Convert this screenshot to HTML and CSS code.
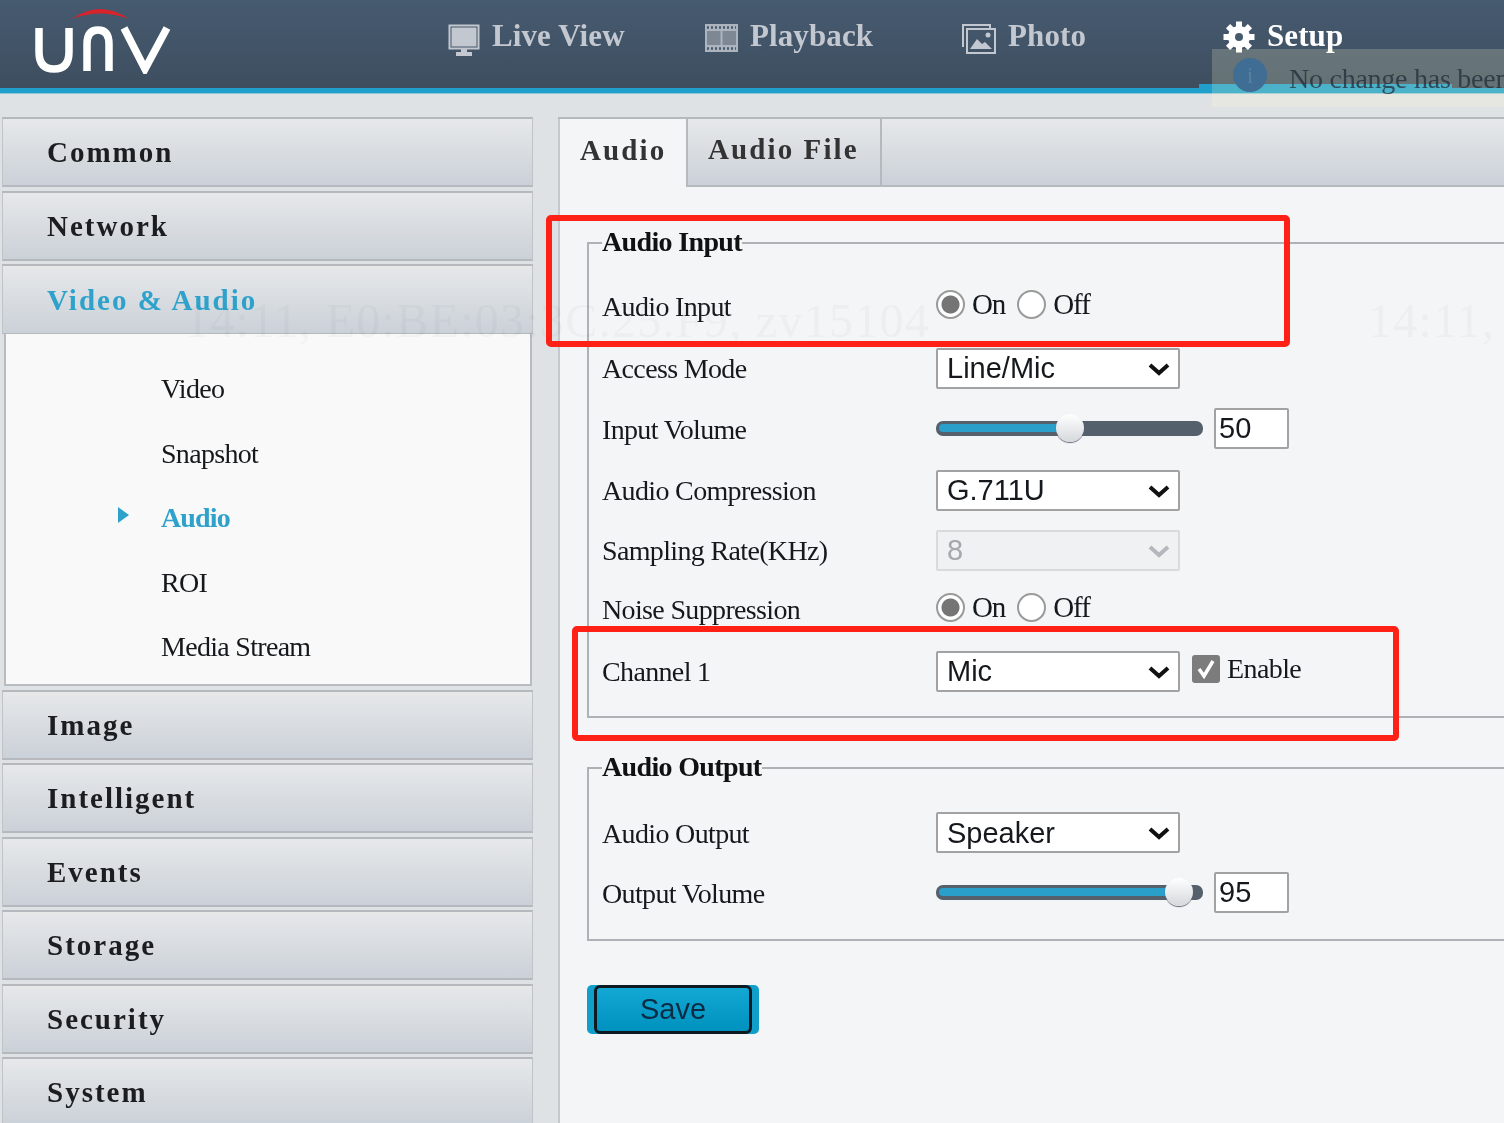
FILE: index.html
```html
<!DOCTYPE html>
<html lang="en">
<head>
<meta charset="utf-8">
<title>Audio Setup</title>
<link rel="stylesheet" href="styles.css">
</head>
<body>
<div class="page">
  <header class="topbar">
    <svg class="logo" width="140" height="72" viewBox="0 0 140 72">
      <path d="M38 17 Q66 -3 95 17 Q66 6 38 17Z" fill="#d8232a"/>
      <path d="M5 26V50Q5 67 20 67Q35 67 35 50V26" fill="none" stroke="#fff" stroke-width="7.5"/>
      <path d="M53 69V42Q53 28 64 28Q75 28 75 42V69" fill="none" stroke="#fff" stroke-width="7.5"/>
      <path d="M90 26L111 67L133 26" fill="none" stroke="#fff" stroke-width="7.5"/>
    </svg>
    <nav class="nav">
      <a class="nav-item">
        <svg width="32" height="34" viewBox="0 0 32 34"><rect x="1" y="1" width="30" height="24" fill="#c3c7d0" stroke="#c3c7d0"/><rect x="3" y="3" width="26" height="20" fill="#c3c7d0" stroke="#46596c" stroke-width="1"/><rect x="13" y="25" width="6" height="4" fill="#c3c7d0"/><rect x="8" y="28" width="16" height="4" fill="#c3c7d0"/></svg>
        <span>Live View</span>
      </a>
      <a class="nav-item">
        <svg width="33" height="28" viewBox="0 0 33 28"><rect width="33" height="28" fill="#aeb4bd"/><path d="M2 3.5H31M2 24.5H31" stroke="#46596c" stroke-width="2.4" stroke-dasharray="2 2"/><rect x="2" y="7" width="13.5" height="14" fill="#7d8894"/><rect x="17.5" y="7" width="13.5" height="14" fill="#7d8894"/></svg>
        <span>Playback</span>
      </a>
      <a class="nav-item">
        <svg width="34" height="30" viewBox="0 0 34 30"><path d="M1 23V1H28V5" fill="none" stroke="#c3c7d0" stroke-width="2"/><rect x="5" y="5" width="28" height="24" fill="none" stroke="#c3c7d0" stroke-width="2"/><path d="M8 25L15 15L20 20L23 18L30 25Z" fill="#c3c7d0"/><circle cx="26" cy="11" r="2.5" fill="#c3c7d0"/></svg>
        <span>Photo</span>
      </a>
      <a class="nav-item active">
        <svg width="32" height="32" viewBox="-16 -16 32 32"><g fill="#fff"><rect x="-3" y="-15.5" width="6" height="31"/><rect x="-3" y="-15.5" width="6" height="31" transform="rotate(45)"/><rect x="-3" y="-15.5" width="6" height="31" transform="rotate(90)"/><rect x="-3" y="-15.5" width="6" height="31" transform="rotate(135)"/></g><circle r="7.5" fill="none" stroke="#fff" stroke-width="7"/><circle r="4" fill="#465a6e"/></svg>
        <span>Setup</span>
      </a>
    </nav>
  </header>

  <main class="body">
    <aside class="sidebar">
      <div class="menu-head">Common</div>
      <div class="menu-head">Network</div>
      <div class="menu-group">
        <div class="menu-head current">Video &amp; Audio</div>
        <ul class="submenu">
          <li>Video</li>
          <li>Snapshot</li>
          <li class="selected">Audio</li>
          <li>ROI</li>
          <li>Media Stream</li>
        </ul>
      </div>
      <div class="menu-head">Image</div>
      <div class="menu-head">Intelligent</div>
      <div class="menu-head">Events</div>
      <div class="menu-head">Storage</div>
      <div class="menu-head">Security</div>
      <div class="menu-head">System</div>
    </aside>

    <section class="content">
      <div class="tabs">
        <div class="tab on">Audio</div>
        <div class="tab">Audio File</div>
      </div>
      <div class="panel">
        <fieldset class="group input-group">
          <legend>Audio Input</legend>
          <div class="row"><label>Audio Input</label><div class="ctl radios"><input type="radio" name="a" checked><span>On</span><input type="radio" name="a"><span>Off</span></div></div>
          <div class="row"><label>Access Mode</label><div class="ctl"><div class="sel"><select><option>Line/Mic</option></select><svg width="22" height="14" viewBox="0 0 22 14"><path d="M2 3L11 11L20 3" fill="none" stroke="#111" stroke-width="4"/></svg></div></div></div>
          <div class="row"><label>Input Volume</label><div class="ctl"><div class="slider"><div class="fill half"></div><div class="thumb"></div></div><input class="num" type="text" value="50"></div></div>
          <div class="row"><label>Audio Compression</label><div class="ctl"><div class="sel"><select><option>G.711U</option></select><svg width="22" height="14" viewBox="0 0 22 14"><path d="M2 3L11 11L20 3" fill="none" stroke="#111" stroke-width="4"/></svg></div></div></div>
          <div class="row"><label>Sampling Rate(KHz)</label><div class="ctl"><div class="sel off"><select disabled><option>8</option></select><svg width="22" height="14" viewBox="0 0 22 14"><path d="M2 3L11 11L20 3" fill="none" stroke="#b4b8bc" stroke-width="4"/></svg></div></div></div>
          <div class="row"><label>Noise Suppression</label><div class="ctl radios"><input type="radio" name="n" checked><span>On</span><input type="radio" name="n"><span>Off</span></div></div>
          <div class="row"><label>Channel 1</label><div class="ctl"><div class="sel"><select><option>Mic</option></select><svg width="22" height="14" viewBox="0 0 22 14"><path d="M2 3L11 11L20 3" fill="none" stroke="#111" stroke-width="4"/></svg></div><div class="check"><svg width="28" height="28" viewBox="0 0 28 28"><rect width="28" height="28" rx="3" fill="#7c7c7c"/><path d="M7 14L12 21L21 6" fill="none" stroke="#fff" stroke-width="3.5"/></svg><span>Enable</span></div></div></div>
        </fieldset>
        <fieldset class="group output-group">
          <legend>Audio Output</legend>
          <div class="row"><label>Audio Output</label><div class="ctl"><div class="sel"><select><option>Speaker</option></select><svg width="22" height="14" viewBox="0 0 22 14"><path d="M2 3L11 11L20 3" fill="none" stroke="#111" stroke-width="4"/></svg></div></div></div>
          <div class="row"><label>Output Volume</label><div class="ctl"><div class="slider"><div class="fill most"></div><div class="thumb"></div></div><input class="num" type="text" value="95"></div></div>
        </fieldset>
        <div class="save-wrap"><button class="save" type="button">Save</button></div>
      </div>
    </section>
  </main>

  <div class="tab-line"></div>
  <div class="toast"><i class="toast-icon">i</i><span>No change has been</span></div>
  <div class="mark mark-a">14:11, E0:BE:03:3C.25.F9, zv15104</div>
  <div class="mark mark-b">14:11,</div>
  <div class="redbox box-a"></div>
  <div class="redbox box-b"></div>
</div>
</body>
</html>
```
FILE: styles.css
```css
* { box-sizing: border-box; }
html, body { margin: 0; height: 100%; overflow: hidden; }
body { font-family: "Liberation Serif", "Times New Roman", serif; color: #15181c; background: #dfe2e5; }
.page { position: relative; width: 1504px; height: 1123px; overflow: hidden; filter: blur(0.6px); }

.topbar { display: flex; height: 93px; background: linear-gradient(#465a70, #3e4e5f); border-bottom: 5px solid #1f9fc9; box-shadow: 0 1px 0 #8fc7da; }
.logo { margin: 2px 0 0 34px; flex: none; }
.nav { display: flex; margin-left: 274px; padding-top: 19px; }
.nav-item { display: flex; align-items: flex-start; gap: 12px; width: 257px; color: #c3c7d0; font-weight: 700; font-size: 31px; line-height: 34px; letter-spacing: 0.1px; }
.nav-item svg { flex: none; margin-top: 5px; }
.nav-item.active { color: #fff; }
.nav-item:nth-child(3) { width: 261px; }
.nav-item.active svg { margin-top: 2px; }

.body { display: flex; padding: 24px 0 0 2px; gap: 25px; }
.sidebar { width: 531px; flex: none; display: flex; flex-direction: column; gap: 3.5px; }
.menu-head { height: 70px; display: flex; align-items: center; padding: 1px 0 0 44px; font-weight: 700; font-size: 29px; letter-spacing: 2px; background: linear-gradient(#e6e8ea, #cbd1d8); border: 1px solid #c0c3c7; border-top: 2px solid #b5b8bc; border-bottom: 2px solid #b5b8bc; color: #1b1d20; }
.menu-head.current { color: #2ea2cb; border-bottom: 1px solid #b5b8bc; }
.submenu { list-style: none; margin: 0 0 0 2px; padding: 34px 0 0 155px; height: 352px; width: 528px; background: #f9f9f9; border: 2px solid #b8bcc0; border-top: 0; }
.submenu li { height: 64.5px; padding-top: 5px; font-size: 28px; line-height: 32px; letter-spacing: -0.7px; position: relative; }
.submenu .selected { color: #2ea2cb; font-weight: 700; letter-spacing: -0.85px; }
.submenu .selected::before { content: ""; position: absolute; left: -43px; top: 10px; border-left: 11px solid #2ea2cb; border-top: 8px solid transparent; border-bottom: 8px solid transparent; }

.content { flex: 1; min-width: 0; }
.tabs { display: flex; height: 70px; background: linear-gradient(#e6e8ea, #cbd1d8); border-top: 2px solid #b5b8bc; border-bottom: 2px solid #b5b8bc; }
.tab { display: flex; align-items: center; padding: 0 21px 5px 20px; font-weight: 700; font-size: 29px; letter-spacing: 2.1px; border-right: 2px solid #b5b8bc; color: #333; }
.tab.on { width: 130px; background: #f4f5f7; border-left: 2px solid #c5c8cc; margin-bottom: -2px; }
.panel { height: 940px; background: #f4f5f7; border-left: 2px solid #c5c8cc; padding: 41px 0 0 27px; }

.group { width: 1000px; margin: 0; padding: 0 0 0 13px; border: 2px solid #aeb1b5; }
.group legend { padding: 0; height: 30px; margin-left: 0; font-weight: 700; font-size: 28px; line-height: 28px; letter-spacing: -0.65px; color: #111; }
.input-group { display: grid; grid-template-rows: 62px 63px 59px 63px 57px 61px 63px; padding-top: 16px; padding-bottom: 14px; }
.output-group { margin-top: 35px; display: grid; grid-template-rows: 60px 60px; padding-top: 19px; padding-bottom: 17px; }
.row { display: flex; align-items: center; }
.row label { width: 334px; flex: none; font-size: 28px; line-height: 32px; letter-spacing: -0.65px; padding-top: 3px; }
.ctl { display: flex; align-items: center; }
.ctl .sel { margin-top: 1px; }

.radios { font-size: 29px; letter-spacing: -1.1px; padding-bottom: 2px; }
.radios input { appearance: none; width: 29px; height: 29px; margin: 0 7px 0 0; border-radius: 50%; border: 2px solid #9a9a9a; background: #fff; }
.radios input:checked { background: radial-gradient(circle, #757575 0 8.5px, #fff 9.5px); }
.radios span + input { margin-left: 12px; }

.sel { position: relative; width: 244px; height: 41px; }
.sel select { appearance: none; width: 100%; height: 100%; padding: 0 0 0 9px; border: 2px solid #a2a2a2; border-radius: 2px; background: #fff; color: #15181c; font-family: "Liberation Sans", Arial, sans-serif; font-size: 29px; }
.sel svg { position: absolute; right: 10px; top: 14px; }
.sel.off select { background: #f0f1f2; border-color: #d8dadc; color: #a5a8ac; opacity: 1; }

.slider { position: relative; width: 267px; height: 15px; border-radius: 7px; background: #54606c; }
.fill { height: 8px; margin: 3px 0 0 3px; border-radius: 4px; background: #2a9fc9; position: absolute; }
.fill.half { width: 131px; }
.fill.most { width: 240px; }
.thumb { position: absolute; top: -7px; width: 28px; height: 28px; border-radius: 50%; background: linear-gradient(#fff, #d5d8dc); box-shadow: 0 1px 1px #667; }
.slider:has(.half) .thumb { left: 120px; }
.slider:has(.most) .thumb { left: 229px; }
.num { width: 75px; height: 41px; margin-left: 11px; padding: 0 3px; border: 2px solid #a2a2a2; border-radius: 2px; background: #fff; color: #15181c; font-family: "Liberation Sans", Arial, sans-serif; font-size: 29px; }

.check { display: flex; align-items: center; gap: 7px; margin-left: 12px; margin-bottom: 4px; font-size: 28px; letter-spacing: -0.6px; }

.save-wrap { margin-top: 44px; width: 172px; height: 49px; border-radius: 5px; background: #109fcb; padding: 0 7px; }
.save { display: block; width: 158px; height: 49px; border: 3px solid #0e1a22; border-radius: 6px; background: linear-gradient(#13a7d4, #0092bf); color: #0c2c44; font-family: "Liberation Sans", Arial, sans-serif; font-size: 29px; padding: 0; }

.tab-line { position: absolute; left: 1199px; top: 84px; width: 253px; height: 9px; background: #1f9fc9; }
.toast { position: absolute; left: 1212px; top: 49px; width: 292px; height: 58px; display: flex; align-items: center; gap: 22px; padding-left: 21px; background: rgba(255, 255, 205, 0.2); color: #222c38; font-size: 28px; letter-spacing: -0.25px; white-space: nowrap; overflow: hidden; }
.toast-icon { flex: none; width: 34px; height: 34px; margin-top: -6px; border-radius: 50%; background: #3f6d94; color: #56809f; font-style: normal; text-align: center; font-size: 24px; line-height: 34px; }
.toast span { margin-top: 2px; opacity: 0.75; }
.mark { position: absolute; top: 292px; font-size: 48px; line-height: 58px; letter-spacing: 1.3px; color: rgba(60, 70, 80, 0.04); white-space: nowrap; pointer-events: none; }
.mark-a { left: 185px; }
.mark-b { left: 1368px; }
.redbox { position: absolute; border: 6px solid #ff2016; border-radius: 5px; pointer-events: none; }
.box-a { left: 546px; top: 215px; width: 744px; height: 132px; }
.box-b { left: 572px; top: 626px; width: 827px; height: 115px; }
```
